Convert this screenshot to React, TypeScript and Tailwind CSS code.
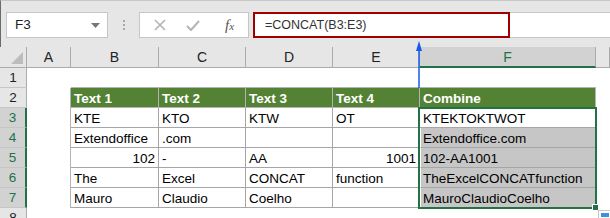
import React from 'react';

const COLS = ['A', 'B', 'C', 'D', 'E', 'F', ''];

// table data B2:F7
const HEAD = ['Text 1', 'Text 2', 'Text 3', 'Text 4', 'Combine'];
const ROWS: { v: string; right?: boolean }[][] = [
  [{ v: 'KTE' }, { v: 'KTO' }, { v: 'KTW' }, { v: 'OT' }, { v: 'KTEKTOKTWOT' }],
  [{ v: 'Extendoffice' }, { v: '.com' }, { v: '' }, { v: '' }, { v: 'Extendoffice.com' }],
  [{ v: '102', right: true }, { v: '-' }, { v: 'AA' }, { v: '1001', right: true }, { v: '102-AA1001' }],
  [{ v: 'The' }, { v: 'Excel' }, { v: 'CONCAT' }, { v: 'function' }, { v: 'TheExcelCONCATfunction' }],
  [{ v: 'Mauro' }, { v: 'Claudio' }, { v: 'Coelho' }, { v: '' }, { v: 'MauroClaudioCoelho' }],
];

function RowHead({ n, active }: { n: number; active?: boolean }) {
  return (
    <div
      className={
        active
          ? 'flex items-center justify-center bg-[#d2d2d2] text-[#217346] border-b border-[#c6c6c6] border-r-2 border-r-[#217346]'
          : 'flex items-center justify-center bg-[#e6e6e6] text-[#222] border-b border-[#c6c6c6] border-r border-r-[#ababab]'
      }
    >
      {n}
    </div>
  );
}

export default function App() {
  return (
    <div className="w-[610px] h-[218px] overflow-hidden relative bg-white text-[13.5px] leading-none" style={{ fontFamily: '"Liberation Sans", Arial, sans-serif' }}>
      {/* formula bar */}
      <div className="h-[47px] bg-[#e6e6e6] border-t border-[#c8c8c8] border-l border-l-[#6b6b6b] flex items-start pt-[11px] pl-[5px]">
        <div className="w-[102px] h-[26px] bg-white border border-[#c6c6c6] flex items-center justify-between pl-[8px] pr-[7px] text-[#222] text-[13.5px]">
          <span>F3</span>
          <svg width="9" height="5" viewBox="0 0 9 5"><path d="M0 0h9L4.5 5z" fill="#777" /></svg>
        </div>
        <div className="w-[31px] h-[26px] flex flex-col items-center justify-center gap-[2px]">
          <span className="w-[2px] h-[2px] bg-[#a8a8a8]" />
          <span className="w-[2px] h-[2px] bg-[#a8a8a8]" />
          <span className="w-[2px] h-[2px] bg-[#a8a8a8]" />
        </div>
        <div className="w-[110px] h-[26px] bg-white border border-[#c6c6c6] flex items-center pl-[14px]">
          <svg width="12" height="12" viewBox="0 0 12 12"><path d="M1 1l10 10M11 1L1 11" stroke="#b4b4b4" strokeWidth="1.6" /></svg>
          <svg className="ml-[20px]" width="14" height="11" viewBox="0 0 14 11"><path d="M1 6l4 4 8-9" stroke="#b4b4b4" strokeWidth="2" fill="none" /></svg>
          <span className="ml-[25px] text-[#555] italic text-[15px]" style={{ fontFamily: '"Liberation Serif", serif' }}>f<span className="text-[11px]">x</span></span>
        </div>
        <div className="ml-[4px] flex-1 h-[26px] bg-white border-y border-[#c6c6c6] flex">
          <div className="w-[257px] h-[26px] -mt-[1px] border-2 border-[#a00000] flex items-center pl-[10px] text-[#333] text-[12.5px]">
            =CONCAT(B3:E3)
          </div>
        </div>
      </div>

      {/* sheet grid */}
      <div className="relative">
        <div className="grid grid-cols-[27px_44px_88px_87px_87px_87px_176px_1fr] grid-rows-[21px_20px_20px_20px_20px_20px_20px_20px_20px]">
          {/* column headers */}
          <div className="bg-[#e6e6e6] border-r border-b border-[#ababab] relative">
            <svg className="absolute right-[3px] bottom-[3px]" width="12" height="12" viewBox="0 0 12 12"><path d="M12 0V12H0z" fill="#bcbcbc" /></svg>
          </div>
          {COLS.map((c, i) =>
            c === 'F' ? (
              <div key={i} className="flex items-center justify-center bg-[#d2d2d2] text-[#217346] border-r border-r-[#ababab] border-b-2 border-b-[#217346] text-[14px]">{c}</div>
            ) : (
              <div key={i} className="flex items-center justify-center bg-[#e6e6e6] text-[#222] border-r border-b border-[#ababab] text-[14px]">{c}</div>
            )
          )}

          {/* row 1 */}
          <RowHead n={1} />
          <div />
          {[0, 1, 2, 3, 4].map((i) => <div key={i} className="border-b border-[#b4b4b4]" />)}
          <div />

          {/* row 2 header */}
          <RowHead n={2} />
          <div className="border-r border-[#b4b4b4]" />
          {HEAD.map((h) => (
            <div key={h} className="bg-[#548235] text-white font-bold flex items-center px-[3px] pt-[2px] border-r border-b border-[#b4b4b4]">{h}</div>
          ))}
          <div />

          {/* rows 3-7 */}
          {ROWS.map((r, ri) => (
            <React.Fragment key={ri}>
              <RowHead n={ri + 3} active />
              <div className="border-r border-[#b4b4b4]" />
              {r.map((c, ci) => (
                <div
                  key={ci}
                  className={
                    'flex items-center px-[3px] pt-[3px] text-black border-r border-b border-[#a6a6a6] whitespace-nowrap overflow-hidden ' +
                    (c.right ? 'justify-end ' : '') +
                    (ci === 4 && ri > 0 ? 'bg-[#c6c6c6] border-l border-l-white pl-[2px]' : '')
                  }
                >
                  {c.v}
                </div>
              ))}
              <div />
            </React.Fragment>
          ))}

          {/* row 8 */}
          <RowHead n={8} />
          <div className="col-span-7" />
        </div>

        {/* selection F3:F7 */}
        <div className="absolute left-[418px] top-[60px] w-[179px] h-[102px] border-2 border-[#217346] pointer-events-none" />
        <div className="absolute left-[592px] top-[157px] w-[7px] h-[7px] bg-[#217346] border border-white" />
      </div>

      {/* paste options */}
      <div className="absolute left-[598px] top-[210px] w-[14px] h-[12px] bg-white border border-[#c6c6c6] p-[2px]">
        <div className="w-[8px] h-[4px] bg-[#3d8fe0]" />
      </div>

      {/* blue arrow */}
      <svg className="absolute left-[413px] top-[40px] pointer-events-none" width="12" height="49" viewBox="0 0 12 49">
        <path d="M6 4V48" stroke="#1759e8" strokeWidth="1.5" />
        <path d="M6 1L9 11H3z" fill="#1759e8" />
      </svg>
    </div>
  );
}
